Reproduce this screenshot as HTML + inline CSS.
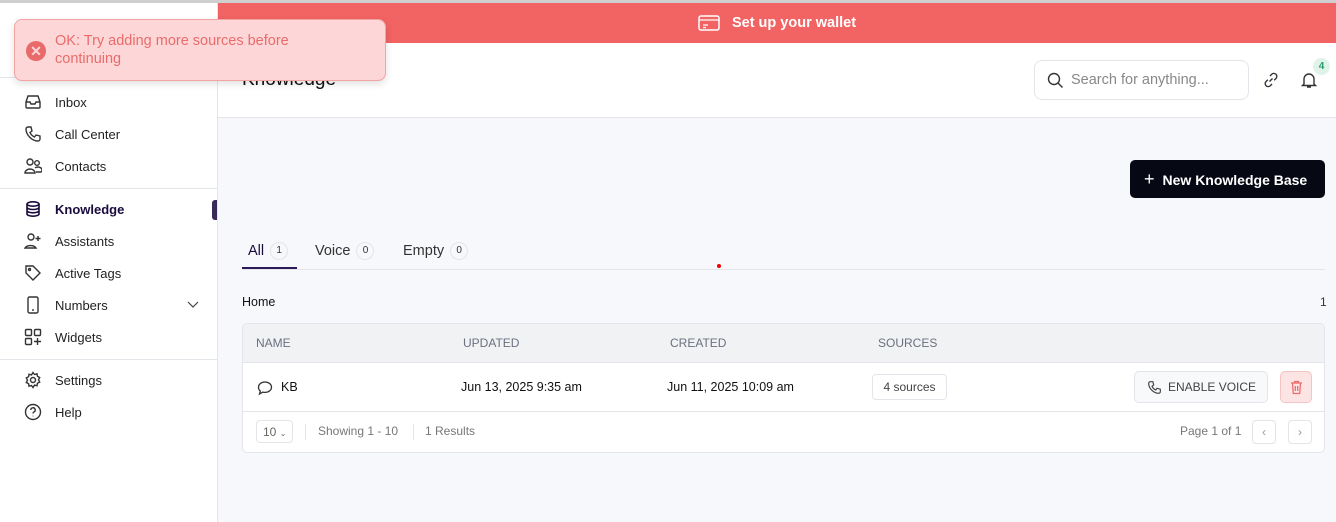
<!DOCTYPE html>
<html><head><meta charset="utf-8"><style>
*{box-sizing:border-box;margin:0;padding:0}
body{width:1336px;height:522px;overflow:hidden;font-family:"Liberation Sans",sans-serif;background:#f7f8fb;position:relative;color:#111}
.topline{position:absolute;left:0;top:0;width:1336px;height:3px;background:#cfcfcf}
.side{position:absolute;left:0;top:3px;width:218px;height:519px;background:#fff;border-right:1px solid #e3e5ea}
.hr{position:absolute;left:0;width:217px;height:1px;background:#e3e5ea}
.nav{position:absolute;left:24px;display:flex;align-items:center;font-size:13px;color:#222}
.nav svg{width:18px;height:18px;margin-right:13px;fill:none;stroke:#333;stroke-width:1.4}
.banner{position:absolute;left:218px;top:3px;width:1118px;height:40px;background:#f26363;color:#fff;font-weight:bold;font-size:14.5px;display:flex;align-items:center;justify-content:center}
.header{position:absolute;left:218px;top:43px;width:1118px;height:75px;background:#fff;border-bottom:1px solid #e3e5ea}
.toast{position:absolute;left:14px;top:19px;width:372px;height:62px;background:#fdd7d7;border:1px solid #f4a3a3;border-radius:8px;box-shadow:0 3px 8px rgba(0,0,0,.12);color:#ea6b6b;font-size:14.5px;line-height:18px;padding:12px 0 0 40px}
.toast .x{position:absolute;left:11px;top:21px;width:20px;height:20px;border-radius:50%;background:#e86a6a;color:#fdd7d7;font-size:14px;font-weight:bold;text-align:center;line-height:20px}
.badge{display:inline-block;width:18px;height:18px;border-radius:50%;border:1px solid #e3e5ea;font-size:10px;text-align:center;line-height:16px;margin-left:6px;color:#333;vertical-align:middle}
.table{position:absolute;left:242px;top:323px;width:1083px;height:130px;background:#fff;border:1px solid #e3e5ea;border-radius:5px;overflow:hidden}
.th{height:39px;background:#f1f2f4;border-bottom:1px solid #e3e5ea;font-size:12px;color:#6b7080;position:relative}
.th span,.tr span{position:absolute;top:50%;transform:translateY(-50%)}
.tr{height:49px;border-bottom:1px solid #e3e5ea;position:relative;font-size:12.5px;color:#111}
.foot{position:relative;height:40px;font-size:12px;color:#777}
</style></head><body>
<div class="topline"></div>
<div class="side">
<div class="hr" style="top:74px"></div>
<div class="hr" style="top:185px"></div>
<div class="hr" style="top:356px"></div>
<div class="nav" style="top:90px"><svg viewBox="0 0 18 18"><path d="M2 9l2-6h10l2 6v5a1 1 0 0 1-1 1H3a1 1 0 0 1-1-1z M2 9h4l1 2h4l1-2h4"/></svg>Inbox</div>
<div class="nav" style="top:122px"><svg viewBox="0 0 18 18"><path d="M4 2l3 0 1 4-2 1.5a9 9 0 0 0 4.5 4.5L12 10l4 1v3a2 2 0 0 1-2 2C8 16 2 10 2 4a2 2 0 0 1 2-2z"/></svg>Call Center</div>
<div class="nav" style="top:154px"><svg viewBox="0 0 18 18"><circle cx="6" cy="5" r="3"/><circle cx="13" cy="6" r="2.3"/><path d="M1 16a5 4 0 0 1 10 0z M11 11a4 3 0 0 1 6 4h-5"/></svg>Contacts</div>
<div class="nav" style="top:197px;font-weight:bold;color:#1a0b3d"><svg viewBox="0 0 18 18" style="stroke:#1a0b3d;stroke-width:1.6"><ellipse cx="9" cy="4" rx="6" ry="2.2"/><path d="M3 4v10c0 1.2 2.7 2.2 6 2.2s6-1 6-2.2V4 M3 7.3c0 1.2 2.7 2.2 6 2.2s6-1 6-2.2 M3 10.6c0 1.2 2.7 2.2 6 2.2s6-1 6-2.2"/></svg>Knowledge</div>
<div style="position:absolute;left:212px;top:197px;width:5px;height:20px;background:#3a2a5a;border-radius:3px 0 0 3px"></div>
<div class="nav" style="top:229px"><svg viewBox="0 0 18 18"><circle cx="7" cy="5" r="3"/><path d="M1 16a6 4 0 0 1 11 0z M14 4v5 M11.5 6.5h5"/></svg>Assistants</div>
<div class="nav" style="top:261px"><svg viewBox="0 0 18 18"><path d="M2 2h7l7 7-7 7-7-7z"/><circle cx="5.5" cy="5.5" r="1"/></svg>Active Tags</div>
<div class="nav" style="top:293px"><svg viewBox="0 0 18 18"><rect x="4" y="1" width="10" height="16" rx="1.5"/><path d="M8 14h2"/></svg>Numbers</div>
<svg style="position:absolute;left:187px;top:298px;width:12px;height:8px" viewBox="0 0 12 8"><path d="M1 1l5 5 5-5" fill="none" stroke="#444" stroke-width="1.2"/></svg>
<div class="nav" style="top:325px"><svg viewBox="0 0 18 18"><rect x="1.5" y="1.5" width="6" height="6" rx="1"/><rect x="10.5" y="1.5" width="6" height="6" rx="1"/><rect x="1.5" y="10.5" width="6" height="6" rx="1"/><path d="M13.5 10v7 M10 13.5h7"/></svg>Widgets</div>
<div class="nav" style="top:368px"><svg viewBox="0 0 18 18"><circle cx="9" cy="9" r="2.5"/><path d="M9 1.5l1.5 2 2.5-.7.4 2.5 2.3 1.2-1.2 2.3 1.2 2.3-2.3 1.2-.4 2.5-2.5-.7L9 16.5l-1.5-2-2.5.7-.4-2.5-2.3-1.2 1.2-2.3-1.2-2.3 2.3-1.2.4-2.5 2.5.7z"/></svg>Settings</div>
<div class="nav" style="top:400px"><svg viewBox="0 0 18 18"><circle cx="9" cy="9" r="7.5"/><path d="M6.8 7a2.2 2.2 0 1 1 3 2c-.6.3-.8.8-.8 1.5 M9 12.8v.4"/></svg>Help</div>
</div>
<div class="banner"><svg width="22" height="16" viewBox="0 0 22 16" style="margin-right:12px"><rect x="1" y="1" width="20" height="14" rx="2" fill="none" stroke="#fff" stroke-width="1.5"/><path d="M1 5h20 M5 10h5 M5 12.5h3" stroke="#fff" stroke-width="1.3"/></svg>Set up your wallet</div>
<div class="header">
<div style="position:absolute;left:24px;top:26px;font-size:19px;color:#111">Knowledge</div>
<div style="position:absolute;left:816px;top:17px;width:215px;height:40px;border:1px solid #e3e5ea;border-radius:8px;font-size:14.5px;color:#888;padding:11px 0 0 36px"><svg style="position:absolute;left:12px;top:11px" width="17" height="17" viewBox="0 0 17 17"><circle cx="7" cy="7" r="5.5" fill="none" stroke="#333" stroke-width="1.4"/><path d="M11 11l4.5 4.5" stroke="#333" stroke-width="1.4"/></svg>Search for anything...</div>
<svg style="position:absolute;left:1044px;top:28px" width="18" height="18" viewBox="0 0 18 18" fill="none" stroke="#333" stroke-width="1.4"><path d="M7.5 10.5l3-3 M8 5l2-2a3 3 0 0 1 4.2 4.2l-2 2 M10 13l-2 2a3 3 0 0 1-4.2-4.2l2-2"/></svg>
<svg style="position:absolute;left:1082px;top:28px" width="18" height="18" viewBox="0 0 18 18" fill="none" stroke="#333" stroke-width="1.4"><path d="M4 13V8a5 5 0 0 1 10 0v5l1.5 1.5h-13z M7 16h4"/></svg>
<div style="position:absolute;left:1095px;top:15px;width:17px;height:17px;border-radius:50%;background:#dff3ea;color:#2a9a6a;font-size:10px;font-weight:bold;text-align:center;line-height:17px">4</div>
</div>
<div class="toast"><div class="x">✕</div>OK: Try adding more sources before<br>continuing</div>
<div style="position:absolute;left:1130px;top:160px;width:195px;height:38px;background:#060814;border-radius:5px;color:#fff;font-weight:bold;font-size:14px;line-height:38px;padding-left:14px"><span style="font-size:18px;font-weight:normal;margin-right:8px">+</span>New Knowledge Base</div>
<div style="position:absolute;left:242px;top:269px;width:1083px;height:1px;background:#e3e5ea"></div>
<div style="position:absolute;left:242px;top:267px;width:55px;height:2px;background:#2a1a5a"></div>
<div style="position:absolute;left:248px;top:242px;font-size:14.5px;color:#1a0b3d">All<span class="badge">1</span></div>
<div style="position:absolute;left:315px;top:242px;font-size:14.5px;color:#333">Voice<span class="badge">0</span></div>
<div style="position:absolute;left:403px;top:242px;font-size:14.5px;color:#333">Empty<span class="badge">0</span></div>
<div style="position:absolute;left:717px;top:264px;width:4px;height:4px;border-radius:50%;background:#e00"></div>
<div style="position:absolute;left:242px;top:295px;font-size:12.5px;color:#111">Home</div>
<div style="position:absolute;left:1320px;top:295px;font-size:12px;color:#333">1</div>
<div class="table">
<div class="th"><span style="left:13px">NAME</span><span style="left:220px">UPDATED</span><span style="left:427px">CREATED</span><span style="left:635px">SOURCES</span></div>
<div class="tr">
<svg style="position:absolute;left:14px;top:17px" width="16" height="16" viewBox="0 0 16 16" fill="none" stroke="#333" stroke-width="1.3"><path d="M8 2c3.6 0 6.5 2.3 6.5 5.2S11.6 12.4 8 12.4c-.8 0-1.5-.1-2.2-.3L2.5 14l.8-3C2.1 10 1.5 8.7 1.5 7.2 1.5 4.3 4.4 2 8 2z"/></svg>
<span style="left:38px">KB</span><span style="left:218px">Jun 13, 2025 9:35 am</span><span style="left:424px">Jun 11, 2025 10:09 am</span>
<div style="position:absolute;left:629px;top:11px;width:75px;height:26px;border:1px solid #e3e5ea;border-radius:4px;font-size:12px;color:#444;text-align:center;line-height:24px">4 sources</div>
<div style="position:absolute;left:891px;top:8px;width:134px;height:32px;border:1px solid #e3e5ea;border-radius:5px;background:#f8f9fb;font-size:12px;color:#444;line-height:30px;padding-left:33px"><svg style="position:absolute;left:12px;top:8px" width="15" height="15" viewBox="0 0 18 18" fill="none" stroke="#444" stroke-width="1.4"><path d="M4 2l3 0 1 4-2 1.5a9 9 0 0 0 4.5 4.5L12 10l4 1v3a2 2 0 0 1-2 2C8 16 2 10 2 4a2 2 0 0 1 2-2z"/></svg>ENABLE VOICE</div>
<div style="position:absolute;left:1037px;top:8px;width:32px;height:32px;border:1px solid #f6c3c3;border-radius:5px;background:#fde4e4"><svg style="position:absolute;left:9px;top:8px" width="13" height="15" viewBox="0 0 13 15" fill="none" stroke="#ee6b6b" stroke-width="1.3"><path d="M1 3h11 M4.5 3V1.5h4V3 M2.5 3l.8 10.5h6.4L10.5 3 M5.3 6v5 M7.7 6v5"/></svg></div>
</div>
<div class="foot">
<div style="position:absolute;left:13px;top:8px;width:37px;height:23px;border:1px solid #e3e5ea;border-radius:4px;font-size:12px;color:#666;padding:4px 0 0 6px">10 <span style="font-size:8px">⌄</span></div>
<div style="position:absolute;left:62px;top:12px;width:1px;height:16px;background:#e3e5ea"></div>
<div style="position:absolute;left:75px;top:12px">Showing 1 - 10</div>
<div style="position:absolute;left:170px;top:12px;width:1px;height:16px;background:#e3e5ea"></div>
<div style="position:absolute;left:182px;top:12px">1 Results</div>
<div style="position:absolute;left:937px;top:12px">Page 1 of 1</div>
<div style="position:absolute;left:1009px;top:8px;width:24px;height:24px;border:1px solid #e3e5ea;border-radius:4px;color:#999;text-align:center;line-height:22px">‹</div>
<div style="position:absolute;left:1045px;top:8px;width:24px;height:24px;border:1px solid #e3e5ea;border-radius:4px;color:#999;text-align:center;line-height:22px">›</div>
</div>
</div>
</body></html>
